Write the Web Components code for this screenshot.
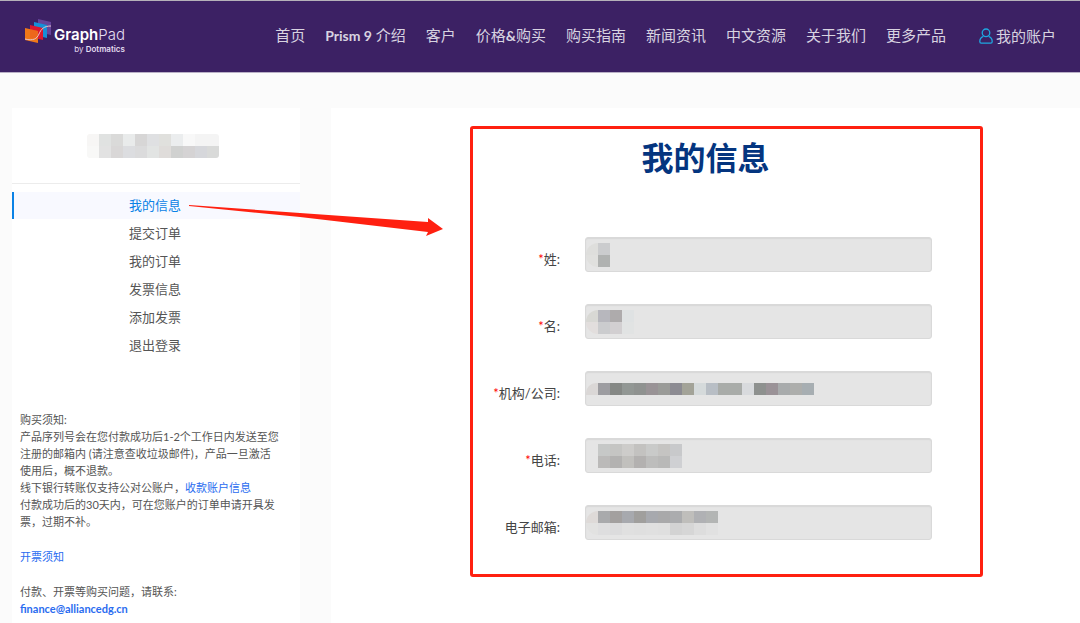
<!DOCTYPE html>
<html lang="zh-CN">
<head>
<meta charset="UTF-8">
<meta name="viewport" content="width=device-width, initial-scale=1">
<title>我的信息 - GraphPad</title>
<style>
    body {
        margin: 0;
        background: #fbfbfb;
        color: #555;
        font-family: Lato, "Noto Sans CJK SC", sans-serif;
        font-size: 13px;
    }
</style>
</head>
<body>
<account-page></account-page>

<script>
// 顶部 logo
class BrandLogo extends HTMLElement {
    constructor() {
        super();
        this.attachShadow({ mode: 'open' });
    }

    connectedCallback() {
        this.shadowRoot.innerHTML = `
            <style>
                :host { display: block; }
                a {
                    display: flex;
                    gap: 2px;
                    color: #fff;
                    text-decoration: none;
                    font-family: Inter, sans-serif;
                }
                svg { display: block; flex: none; }
                .words { text-align: right; padding-top: 8px; }
                .name { font-size: 15px; line-height: 18px; font-weight: 300; color: #e4def0; }
                .name b { font-weight: 600; color: #fff; }
                .by { font-size: 8px; line-height: 10px; color: #e4def0; }
                .by b { font-weight: 600; }
            </style>
            <a href="#">
                <svg width="28" height="28" viewBox="0 0 28 28" aria-hidden="true">
                    <path d="M14 1l13 3v13l-13-3z" fill="#65449b"/>
                    <path d="M10 4l13 3v13l-13-3z" fill="#168fd8"/>
                    <path d="M6 7l13 3v12L6 19z" fill="#dc1830"/>
                    <path d="M1 10l13 3v12L1 22z" fill="#f07818"/>
                    <path d="M6 11l8 2v9l-8-2z" fill="#e94e20" opacity=".4"/>
                    <path d="M1 21c8 2 12 0 14-5s5-8 12-8" fill="none" stroke="#e6c4c8" stroke-width="1"/>
                </svg>
                <div class="words">
                    <div class="name"><b>Graph</b>Pad</div>
                    <div class="by">by <b>Dotmatics</b></div>
                </div>
            </a>
        `;
    }
}

class SiteHeader extends HTMLElement {
    constructor() {
        super();
        this.attachShadow({ mode: 'open' });
    }

    connectedCallback() {
        this.shadowRoot.innerHTML = `
            <style>
                :host { display: block; }
                header {
                    display: flex;
                    justify-content: space-between;
                    align-items: center;
                    height: 69px;
                    padding: 0 24px 2px;
                    background: #3c2164;
                    border-top: 1px solid #b5b1b9;
                    border-bottom: 1px solid #b9b0c6;
                }
                nav {
                    display: flex;
                    gap: 20px;
                    font-size: 15px;
                    line-height: 24px;
                    white-space: nowrap;
                }
                nav a { color: #d8d3e0; text-decoration: none; }
                nav b { font-size: 14px; }
                .account {
                    display: flex;
                    align-items: center;
                    gap: 3px;
                    margin-left: 13px;
                }
                svg { display: block; }
            </style>
            <header>
                <brand-logo></brand-logo>
                <nav>
                    <a href="#">首页</a>
                    <a href="#"><b>Prism 9</b> 介绍</a>
                    <a href="#">客户</a>
                    <a href="#">价格<b>&amp;</b>购买</a>
                    <a href="#">购买指南</a>
                    <a href="#">新闻资讯</a>
                    <a href="#">中文资源</a>
                    <a href="#">关于我们</a>
                    <a href="#">更多产品</a>
                    <a href="#" class="account">
                        <svg width="14" height="16" viewBox="0 0 14 16" fill="none" stroke="#1ea7e0" stroke-width="1.3" aria-hidden="true">
                            <circle cx="7" cy="4.8" r="3.8"/>
                            <path d="M4.3 8.4C2 9.3.8 11 .8 13.6c0 1 .4 1.6 1.3 1.6h9.8c.9 0 1.3-.6 1.3-1.6 0-2.6-1.2-4.3-3.5-5.2"/>
                        </svg>
                        我的账户
                    </a>
                </nav>
            </header>
        `;
    }
}

// 马赛克遮罩: rows 为颜色列表, 行之间用 "|" 分隔, "-" 表示空白
class PixelMask extends HTMLElement {
    constructor() {
        super();
        this.attachShadow({ mode: 'open' });
    }

    connectedCallback() {
        const rows = this.getAttribute('rows').split('|').map(r => r.trim().split(/\s+/));
        const size = 12;
        const width = Math.max(...rows.map(r => r.length)) * size;
        const height = rows.length * size;
        const radius = this.getAttribute('radius') || '0';
        let rects = '';
        rows.forEach((row, y) => row.forEach((color, x) => {
            if (color !== '-') {
                rects += `<rect x="${x * size}" y="${y * size}" width="${size}" height="${size}" fill="#${color}"/>`;
            }
        }));
        this.shadowRoot.innerHTML = `
            <style>
                :host { display: block; }
                svg { display: block; border-radius: ${radius}; }
            </style>
            <svg width="${width}" height="${height}" shape-rendering="crispEdges" aria-hidden="true">${rects}</svg>
        `;
    }
}

class SideMenu extends HTMLElement {
    constructor() {
        super();
        this.attachShadow({ mode: 'open' });
    }

    connectedCallback() {
        const items = ['我的信息', '提交订单', '我的订单', '发票信息', '添加发票', '退出登录'];
        const links = items.map((text, i) =>
            `<a href="#"${i === 0 ? ' class="active" aria-current="page"' : ''}>${text}</a>`
        ).join('');
        this.shadowRoot.innerHTML = `
            <style>
                :host { display: block; }
                nav { display: flex; flex-direction: column; gap: 1px; padding-top: 8px; }
                a {
                    border-left: 2px solid transparent;
                    padding-right: 4px;
                    line-height: 27px;
                    text-align: center;
                    color: #555;
                    text-decoration: none;
                }
                a.active {
                    border-color: #0a82e6;
                    background: #f8f9ff;
                    color: #0a82e6;
                }
            </style>
            <nav>${links}</nav>
        `;
    }
}

class PurchaseNotice extends HTMLElement {
    constructor() {
        super();
        this.attachShadow({ mode: 'open' });
    }

    connectedCallback() {
        this.shadowRoot.innerHTML = `
            <style>
                :host { display: block; padding: 0 8px; }
                p { margin: 0 0 18px; font-size: 11px; line-height: 17px; white-space: nowrap; }
                p:last-child { margin: 0; }
                a { color: #2a6cf0; text-decoration: none; }
                .mail { font-weight: bold; }
            </style>
            <p>
                购买须知:<br>
                产品序列号会在您付款成功后1-2个工作日内发送至您<br>
                注册的邮箱内 (请注意查收垃圾邮件)，产品一旦激活<br>
                使用后，概不退款。<br>
                线下银行转账仅支持公对公账户，<a href="#">收款账户信息</a><br>
                付款成功后的30天内，可在您账户的订单申请开具发<br>
                票，过期不补。
            </p>
            <p><a href="#">开票须知</a></p>
            <p>
                付款、开票等购买问题，请联系:<br>
                <a class="mail" href="mailto:finance@alliancedg.cn">finance@alliancedg.cn</a>
            </p>
        `;
    }
}

class InfoField extends HTMLElement {
    constructor() {
        super();
        this.attachShadow({ mode: 'open' });
    }

    connectedCallback() {
        const label = this.getAttribute('label');
        const star = this.hasAttribute('required') ? '<span>*</span>' : '';
        this.shadowRoot.innerHTML = `
            <style>
                :host {
                    display: grid;
                    grid-template-columns: 229fr 347fr 123fr;
                    column-gap: 25px;
                    align-items: end;
                }
                label { text-align: right; line-height: 25px; color: #444; }
                label span { color: #f00; }
                .box { position: relative; }
                input {
                    display: block;
                    box-sizing: border-box;
                    width: 100%;
                    height: 35px;
                    padding: 0 12px;
                    border: 1px solid #d9d9d9;
                    border-radius: 3px;
                    background: #e5e5e5;
                    box-shadow: inset 0 1px 1px #d8d8d8;
                    font: inherit;
                    outline: none;
                }
                /* 遮罩盖在输入框内容上 */
                .mask {
                    position: absolute;
                    inset: 0 auto 0 1px;
                    display: flex;
                    align-items: center;
                }
            </style>
            <label for="value">${star}${label}:</label>
            <div class="box">
                <input id="value" type="text" readonly>
                <div class="mask"><slot></slot></div>
            </div>
        `;
    }
}

class AccountPage extends HTMLElement {
    constructor() {
        super();
        this.attachShadow({ mode: 'open' });
    }

    connectedCallback() {
        this.shadowRoot.innerHTML = `
            <style>
                :host { display: flex; flex-direction: column; min-height: 100vh; }
                .content {
                    position: relative;
                    flex: 1;
                    display: flex;
                    gap: 31px;
                    padding: 35px 0 0 12px;
                }
                aside { flex: none; width: 288px; background: #fff; }
                .user {
                    display: flex;
                    justify-content: center;
                    align-items: center;
                    height: 75px;
                    padding-right: 6px;
                    border-bottom: 1px solid #ececec;
                }
                purchase-notice { margin-top: 52px; }
                main {
                    position: relative;
                    display: flow-root;
                    flex: 1;
                    min-width: 0;
                    background: #fff;
                }
                h1 {
                    margin: 26px 0 55px;
                    font-size: 32px;
                    line-height: 48px;
                    text-align: center;
                    color: #04357f;
                }
                form { display: grid; row-gap: 32px; }
                /* 标注: 红框和箭头 */
                .frame {
                    position: absolute;
                    top: 18px;
                    left: 139px;
                    right: 97px;
                    height: 445px;
                    border: 3px solid #ff2010;
                    border-radius: 3px;
                    pointer-events: none;
                }
                .arrow {
                    position: absolute;
                    top: 132px;
                    left: 189px;
                    pointer-events: none;
                }
            </style>
            <site-header></site-header>
            <div class="content">
                <aside>
                    <div class="user">
                        <pixel-mask radius="3px" rows="f7f6f5 e0e2e1 dadad9 e9ebeb d7d6d6 dfe0e2 e0e0dd ebedee f8f8f8 f4f4f4 f4f4f4 | f8f8f7 e2e2e2 d9d7d7 dcdde0 dbdbdc e2e4e3 dfdcda d0d1d0 d5d3d4 d6d7db d9dad9"></pixel-mask>
                    </div>
                    <side-menu></side-menu>
                    <purchase-notice></purchase-notice>
                </aside>
                <main>
                    <h1>我的信息</h1>
                    <form>
                        <info-field label="姓" required>
                            <pixel-mask radius="12px 0 0 12px" rows="dededc cbccce | e0e0de b0b2b1"></pixel-mask>
                        </info-field>
                        <info-field label="名" required>
                            <pixel-mask radius="12px 0 0 12px" rows="d8d8d4 b7b7bd aeabac dfe2e3 | e2dedd cbccce d2cfd1 e1e3e3"></pixel-mask>
                        </info-field>
                        <info-field label="机构/公司" required>
                            <pixel-mask radius="10px 0 0 0" rows="dad7d6 9d9da1 858885 929794 8f9290 999396 9a9b98 8c8b92 a3a398 d5dadb b8bec5 a9aca9 a9aca9 d8dadd 8e918f 9a9297 a8abac adaeac a7aeb2"></pixel-mask>
                        </info-field>
                        <info-field label="电话" required>
                            <pixel-mask rows="- c6c8c7 c5c5c3 cdccca c3c2c0 c9cac9 c5c4c2 c8c9cb | - bbbab9 b3b2b1 c1c0bd b3b1b0 bdbdbc b9b9b8 cfd0d3"></pixel-mask>
                        </info-field>
                        <info-field label="电子邮箱">
                            <pixel-mask radius="12px 0 0 12px" rows="dedad8 a9aaac a3a09f a7a9ae a09f9d a7a9ae a9a9aa abacae bfbebb b0b1b4 b3b5b4 | e2e2e1 dededf dcdcdd e0e0e0 dfdfdf e0e0e0 dfdfdf d3d3d3 d6d6d6 dddddd e1e1e1"></pixel-mask>
                        </info-field>
                    </form>
                    <div class="frame"></div>
                </main>
                <svg class="arrow" width="256" height="36" viewBox="0 0 256 36" aria-hidden="true">
                    <path d="M0 0L111 8L239 17L239 13L254 24L237 31L239 27L111 12L0 1Z" fill="#ff2010"/>
                </svg>
            </div>
        `;
    }
}

customElements.define('brand-logo', BrandLogo);
customElements.define('site-header', SiteHeader);
customElements.define('pixel-mask', PixelMask);
customElements.define('side-menu', SideMenu);
customElements.define('purchase-notice', PurchaseNotice);
customElements.define('info-field', InfoField);
customElements.define('account-page', AccountPage);
</script>
</body>
</html>
